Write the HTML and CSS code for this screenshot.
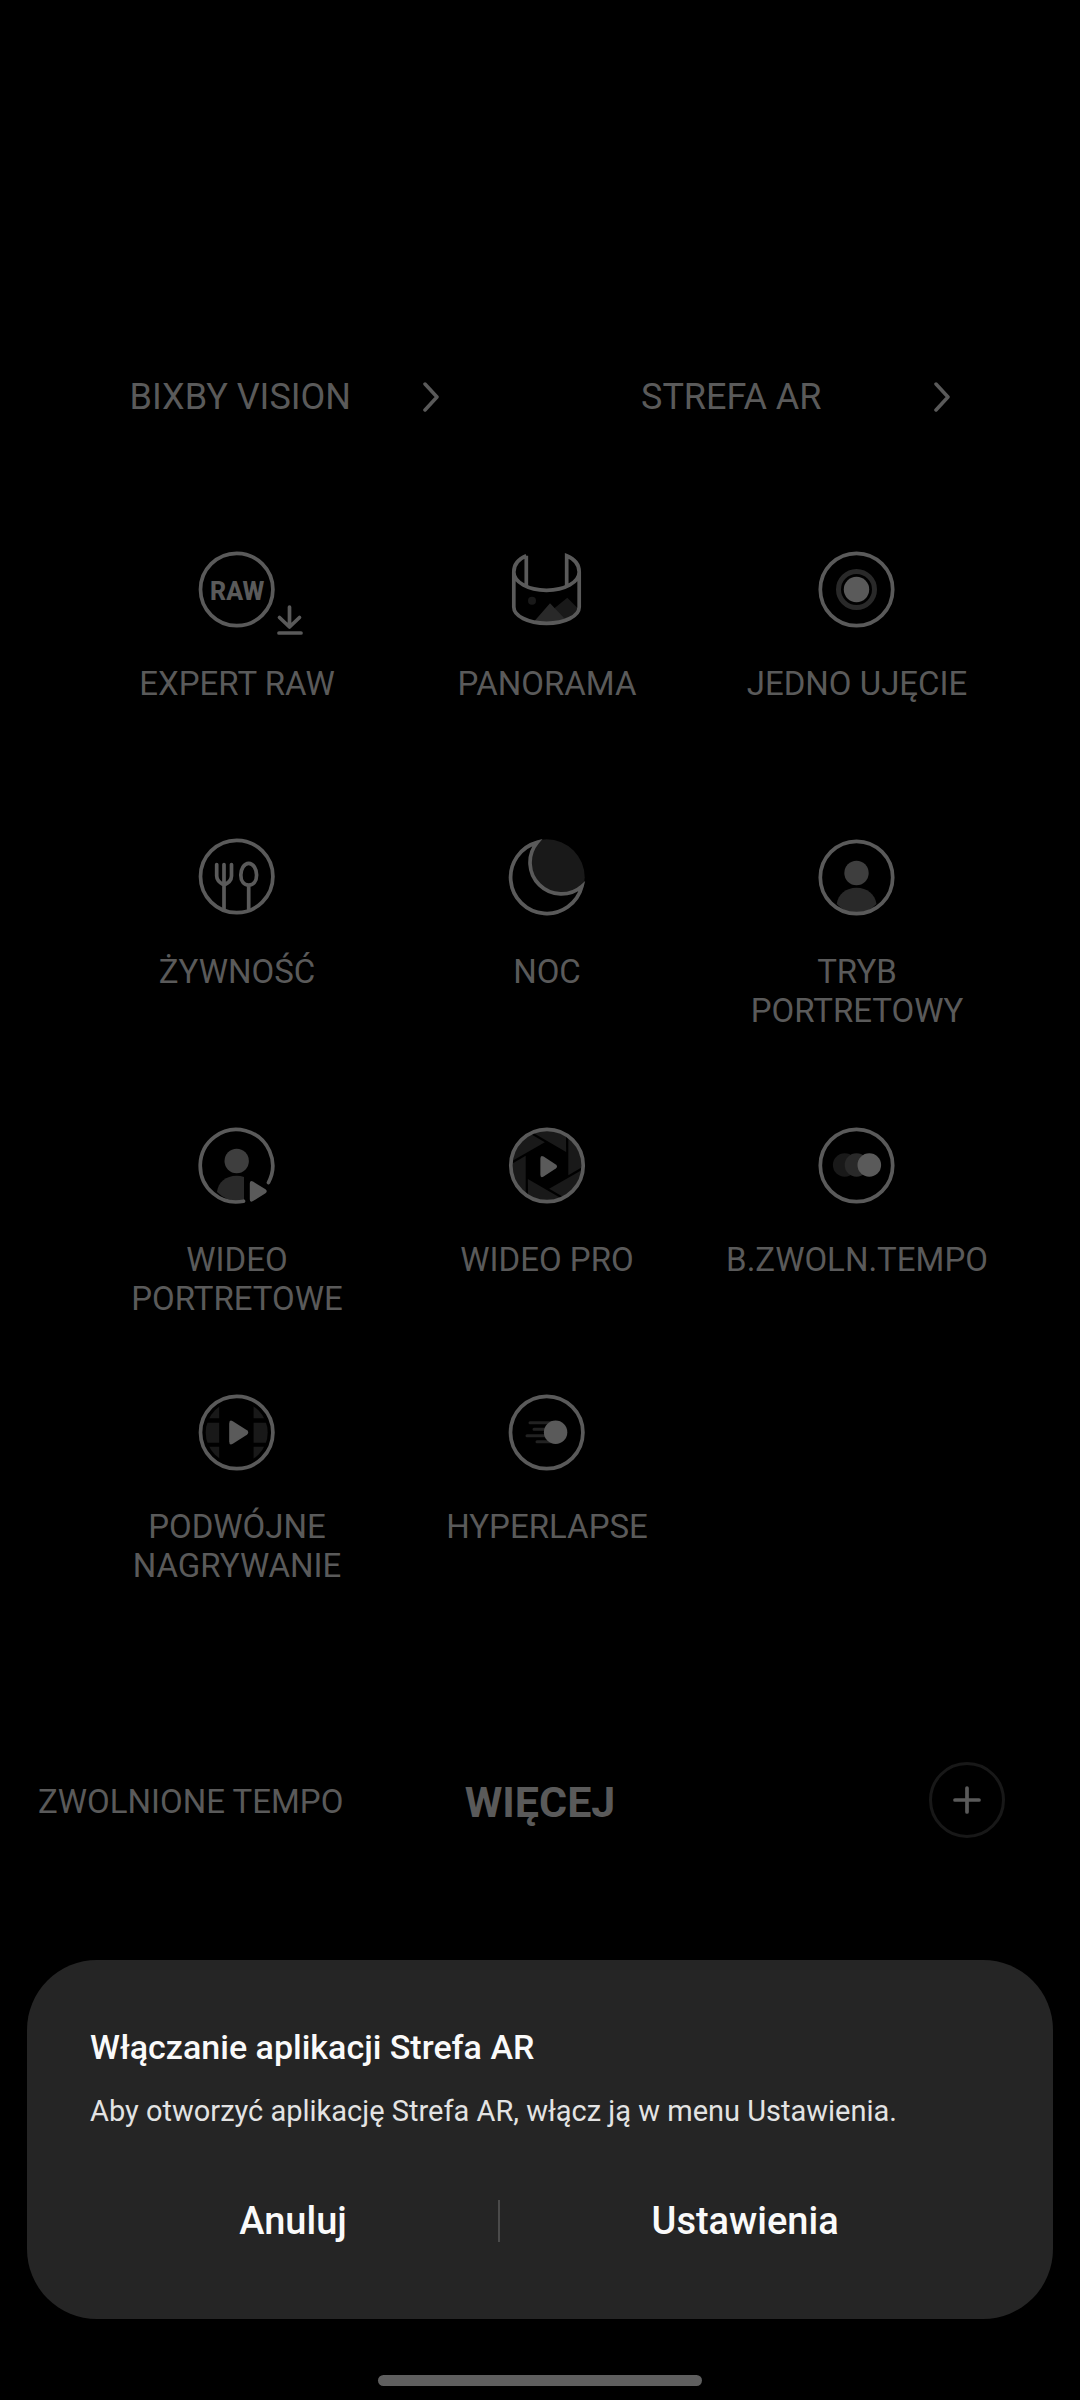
FILE: index.html
```html
<!DOCTYPE html>
<html lang="pl">
<head>
<meta charset="utf-8">
<meta name="viewport" content="width=device-width, initial-scale=1">
<title>Aparat</title>
<link rel="stylesheet" href="styles.css">
</head>
<body>
<main class="camera">
  <nav class="shortcuts">
    <a class="shortcut" href="#bixby">BIXBY VISION
      <svg class="chevron" viewBox="0 0 16 30"><path d="M2 2L14 15L2 28"/></svg>
    </a>
    <a class="shortcut" href="#ar">STREFA AR
      <svg class="chevron" viewBox="0 0 16 30"><path d="M2 2L14 15L2 28"/></svg>
    </a>
  </nav>

  <div class="modes">
    <button class="mode" type="button">
      <svg class="icon" viewBox="0 0 78 78">
        <circle class="line" cx="38.7" cy="39.5" r="36.2"/>
        <text class="raw" x="39.2" y="50">RAW</text>
        <path class="line round" d="M91.5 57V76M81.5 67.5L91.5 77L101.5 67.5M81 83H103"/>
      </svg>
      <span>EXPERT RAW</span>
    </button>
    <button class="mode" type="button">
      <svg class="icon" viewBox="0 0 78 78">
        <circle class="tone1" cx="24" cy="50.7" r="4"/>
        <path class="tone1" d="M32 70L59.3 47.7L69.5 58V60Q62 69 50 71.5Z"/>
        <path class="tone2" d="M26.5 71L42 53.3L57.5 69.5Q42 75 26.5 71Z"/>
        <path class="line" d="M18.3 5.8C10.5 9 5.8 15 5.8 22V57C5.8 66 20 73.3 38.5 73.3S71.2 66 71.2 57V22C71.2 15 66.5 9 58.7 5.8V36M18.3 36V5.8M5.8 22C5.8 32 20 40.3 38.5 40.3S71.2 32 71.2 22"/>
      </svg>
      <span>PANORAMA</span>
    </button>
    <button class="mode" type="button">
      <svg class="icon" viewBox="0 0 78 78">
        <circle class="line" cx="38.5" cy="39.5" r="36.2"/>
        <circle class="ring" cx="38.5" cy="39.5" r="18"/>
        <circle class="solid" cx="38.5" cy="39.5" r="12.7"/>
      </svg>
      <span>JEDNO UJĘCIE</span>
    </button>

    <button class="mode" type="button">
      <svg class="icon" viewBox="0 0 78 78">
        <circle class="line" cx="38.7" cy="38.5" r="36.2"/>
        <path class="line round" d="M18.7 26.5V38C18.7 43 22 45 26 47C30 45 33.5 43 33.5 38V26.5M26 26.5V72M50.7 49V72"/>
        <path class="line" d="M50.7 25.3C46 25.3 42.8 31.5 42.8 37C42.8 43 46 47 50.7 47S58.6 43 58.6 37C58.6 31.5 55.4 25.3 50.7 25.3Z"/>
      </svg>
      <span>ŻYWNOŚĆ</span>
    </button>
    <button class="mode" type="button">
      <svg class="icon" viewBox="0 0 78 78">
        <circle class="tone1" cx="38.7" cy="39.3" r="38"/>
        <path class="line moon" d="M29.3 4.4A36.2 36.2 0 1 0 73.9 48.3A31.4 31.4 0 0 1 29.3 4.4Z"/>
      </svg>
      <span>NOC</span>
    </button>
    <button class="mode" type="button">
      <svg class="icon" viewBox="0 0 78 78">
        <circle class="tone3" cx="38.5" cy="35" r="12.2"/>
        <path class="tone2" d="M18.7 66C20 56 28 49.7 38.5 49.7S57 56 58.5 66Q50 75 38.5 75T18.7 66Z"/>
        <circle class="line" cx="38.5" cy="39.5" r="36.2"/>
      </svg>
      <span>TRYB PORTRETOWY</span>
    </button>

    <button class="mode" type="button">
      <svg class="icon" viewBox="0 0 78 78">
        <circle class="tone3" cx="38.7" cy="35" r="12.2"/>
        <path class="tone2" d="M46 51V75Q30 77 19 66C20 56 28 49.7 38.7 49.7Q42.5 49.7 46 51Z"/>
        <path class="line round" d="M70.5 56.5A36.2 36.2 0 1 0 45.5 75.2"/>
        <path class="solid" d="M51.8 57.5Q51.8 53.7 55 55.6L67.5 63.3Q70 65.3 67.5 67.3L55 75Q51.8 77 51.8 73.3Z"/>
      </svg>
      <span>WIDEO PORTRETOWE</span>
    </button>
    <button class="mode" type="button">
      <svg class="icon" viewBox="0 0 78 78">
        <defs><path id="blade" d="M60.3 12V49.3L73.5 41.5A34.5 34.5 0 0 0 60.3 12Z"/></defs>
        <g class="tone1">
          <use href="#blade"/>
          <use href="#blade" transform="rotate(60 39 39.5)"/>
          <use href="#blade" transform="rotate(120 39 39.5)"/>
          <use href="#blade" transform="rotate(180 39 39.5)"/>
          <use href="#blade" transform="rotate(240 39 39.5)"/>
          <use href="#blade" transform="rotate(300 39 39.5)"/>
        </g>
        <circle class="line" cx="39" cy="39.5" r="36.2"/>
        <path class="solid" d="M32.4 32.5Q32.4 28.7 35.6 30.6L47.8 38.5Q50.3 40.5 47.8 42.5L35.6 50.5Q32.4 52.5 32.4 48.7Z"/>
      </svg>
      <span>WIDEO PRO</span>
    </button>
    <button class="mode" type="button">
      <svg class="icon" viewBox="0 0 78 78">
        <circle class="line" cx="38.5" cy="39.5" r="36.2"/>
        <circle class="tone1" cx="26.7" cy="39" r="11.8"/>
        <circle class="tone2" cx="38.5" cy="39" r="11.8"/>
        <circle class="solid" cx="51.3" cy="39" r="11.8"/>
      </svg>
      <span>B.ZWOLN.TEMPO</span>
    </button>

    <button class="mode" type="button">
      <svg class="icon" viewBox="0 0 78 78">
        <clipPath id="film"><circle cx="38.7" cy="39.5" r="31"/></clipPath>
        <path class="tone1" clip-path="url(#film)" d="M5 12H21.2V25.3H5ZM5 29.7H21.2V49.7H5ZM5 53.7H21.2V68H5ZM55.6 12H73V25.3H55.6ZM55.6 29.7H73V49.7H55.6ZM55.6 53.7H73V68H55.6Z"/>
        <circle class="line" cx="38.7" cy="39.5" r="36.2"/>
        <path class="solid" d="M31.2 30.5Q31.2 26.2 34.8 28.3L49 37.3Q51.5 39.5 49 41.7L34.8 50.7Q31.2 52.8 31.2 48.5Z"/>
      </svg>
      <span>PODWÓJNE NAGRYWANIE</span>
    </button>
    <button class="mode" type="button">
      <svg class="icon" viewBox="0 0 78 78">
        <circle class="line" cx="38.7" cy="39.5" r="36.2"/>
        <path class="speed" d="M22 29.7H48M26 36.3H48M19 42.7H48M29 48.7H48"/>
        <circle class="solid" cx="47.6" cy="39.3" r="11.7"/>
      </svg>
      <span>HYPERLAPSE</span>
    </button>
  </div>

  <div class="mode-bar">
    <button class="mode-tab" type="button">ZWOLNIONE TEMPO</button>
    <button class="mode-tab mode-tab-active" type="button">WIĘCEJ</button>
    <button class="add" type="button" aria-label="Dodaj">
      <svg class="plus" viewBox="0 0 28 28"><path class="line round" d="M14 2V26M2 14H26"/></svg>
    </button>
  </div>
</main>

<section class="dialog" role="dialog" aria-labelledby="dialog-title">
  <h1 class="dialog-title" id="dialog-title">Włączanie aplikacji Strefa AR</h1>
  <p class="dialog-text">Aby otworzyć aplikację Strefa AR, włącz ją w menu Ustawienia.</p>
  <div class="dialog-actions">
    <button class="action" type="button">Anuluj</button>
    <span class="divider"></span>
    <button class="action" type="button">Ustawienia</button>
  </div>
</section>
<div class="home-handle"></div>
</body>
</html>
```

FILE: styles.css
```css
:root {
  --dim: #5a5a5a;
}

* {
  box-sizing: border-box;
}

body {
  margin: 0;
  min-height: 100vh;
  background: #000;
  font-family: Roboto, "Liberation Sans", sans-serif;
  color: var(--dim);
}

button {
  margin: 0;
  padding: 0;
  border: 0;
  background: none;
  color: inherit;
  font: inherit;
}

.camera {
  padding-top: 376px;
}

.shortcuts {
  display: grid;
  grid-template-columns: 1fr 1fr;
  column-gap: 202px;
  padding: 0 12%;
}

.shortcut {
  display: flex;
  align-items: center;
  justify-content: space-between;
  color: inherit;
  font-size: 36px;
  line-height: 42px;
  text-decoration: none;
}

.chevron {
  width: 16px;
  height: 30px;
  fill: none;
  stroke: var(--dim);
  stroke-width: 3.5;
  stroke-linecap: round;
  stroke-linejoin: round;
}

.modes {
  display: grid;
  grid-template-columns: repeat(3, 1fr);
  grid-template-rows: 288px 288px 267px auto;
  align-items: start;
  margin: 132px 68px 0 82px;
}

.mode {
  display: flex;
  flex-direction: column;
  align-items: center;
  gap: 36px;
  padding: 0 16px;
  font-size: 33px;
  line-height: 39px;
}

.icon {
  width: 78px;
  height: 78px;
  overflow: visible;
}

.line {
  fill: none;
  stroke: var(--dim);
  stroke-width: 3.7;
}

.round {
  stroke-linecap: round;
  stroke-linejoin: round;
}

.solid {
  fill: var(--dim);
}

.tone1 {
  fill: #191919;
}

.tone2 {
  fill: #292929;
}

.tone3 {
  fill: #3e3e3e;
}

.moon {
  fill: #000;
}

.ring {
  fill: none;
  stroke: #292929;
  stroke-width: 5;
}

.speed {
  fill: none;
  stroke: #222;
  stroke-width: 3;
  stroke-linecap: round;
}

.raw {
  fill: var(--dim);
  font-size: 25px;
  font-weight: 800;
  text-anchor: middle;
}

.mode-bar {
  display: grid;
  grid-template-columns: 1fr auto 1fr;
  align-items: center;
  margin-top: 177px;
}

.mode-tab {
  justify-self: start;
  padding: 3px 0 0 38px;
  font-size: 33px;
  line-height: 39px;
}

.mode-tab-active {
  padding-left: 0;
  font-size: 43px;
  line-height: 50px;
  font-weight: 700;
}

.add {
  display: flex;
  align-items: center;
  justify-content: center;
  justify-self: end;
  width: 76px;
  height: 76px;
  margin-right: 75px;
  border: 3px solid #181818;
  border-radius: 50%;
}

.plus {
  width: 28px;
  height: 28px;
}

.dialog {
  margin: 122px 27px 0;
  padding: 67px 63px 68px 61px;
  border-radius: 70px;
  background: #252525;
  color: #fafafa;
}

.dialog-title {
  margin: 0 2px;
  font-size: 34px;
  line-height: 40px;
  font-weight: 500;
}

.dialog-text {
  margin: 26px 2px 62px;
  color: #e3e3e3;
  font-size: 29px;
  line-height: 36px;
}

.dialog-actions {
  display: flex;
  align-items: center;
}

.action {
  flex: 1 1 auto;
  height: 60px;
  font-size: 38px;
  line-height: 44px;
  font-weight: 500;
}

.divider {
  width: 2px;
  height: 42px;
  background: #4a4a4a;
}

.home-handle {
  width: 30%;
  height: 11px;
  margin: 56px auto 0;
  border-radius: 6px;
  background: #5f5f5f;
}
```
